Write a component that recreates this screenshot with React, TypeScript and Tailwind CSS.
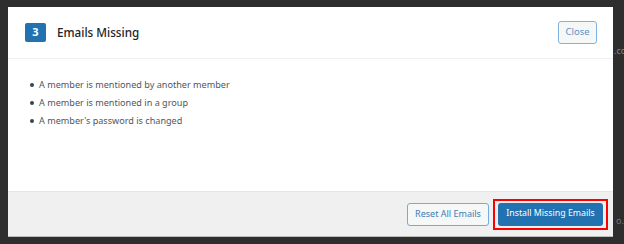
import React from "react";

export default function App() {
  const items = [
    "A member is mentioned by another member",
    "A member is mentioned in a group",
    "A member's password is changed",
  ];
  return (
    <div
      className="relative w-[624px] h-[244px] bg-[#2e2e2e] overflow-hidden pt-[7px] pl-[8px]"
      style={{ fontFamily: '"Noto Sans", "Open Sans", sans-serif' }}
    >
      <div className="absolute left-[614px] top-[44px] text-[9px] text-[#7a8a99]">.co</div>
      <div className="absolute left-[616px] top-[214px] text-[9px] text-[#777]">o.</div>
      <div className="w-[605px] h-[229px] bg-white flex flex-col shadow-[0_1px_0_#bdbdbd]">
        <div className="h-[52px] flex items-center pl-[17px] pr-[16px] border-b border-[#f0f0f0] shrink-0">
          <div className="w-[21px] h-[19px] rounded-[2px] bg-[#2271b1] text-white text-[11px] font-bold flex items-center justify-center">
            3
          </div>
          <div className="ml-[11px] text-[11.7px] text-[#1d2327] font-medium">Emails Missing</div>
          <div className="ml-auto h-[23px] w-[39px] flex items-center justify-center rounded-[3px] border border-[#7fb2df] bg-[#f6f7f7] text-[9.5px] text-[#5b93c6]">
            Close
          </div>
        </div>
        <div className="flex-1 pt-[17px] pl-[22px]">
          <ul className="flex flex-col">
            {items.map((t) => (
              <li key={t} className="h-[18px] flex items-center text-[9.1px] text-[#50575e]">
                <span className="w-[4px] h-[4px] rounded-full bg-[#3c434a] mr-[5px]"></span>
                {t}
              </li>
            ))}
          </ul>
        </div>
        <div className="h-[45px] shrink-0 bg-[#f0f0f0] border-t border-[#e6e6e6] flex items-center justify-end pr-[5px]">
          <div className="h-[23px] w-[82px] flex items-center justify-center rounded-[3px] border border-[#76abd9] bg-[#f6f7f7] text-[9px] text-[#3f7db5]">
            Reset All Emails
          </div>
          <div className="ml-[4px] border-2 border-[#ff0000] px-[3px] py-[2px]">
            <div className="h-[23px] w-[105px] flex items-center justify-center rounded-[3px] bg-[#2271b1] text-[8.8px] text-white">
              Install Missing Emails
            </div>
          </div>
        </div>
      </div>
    </div>
  );
}
